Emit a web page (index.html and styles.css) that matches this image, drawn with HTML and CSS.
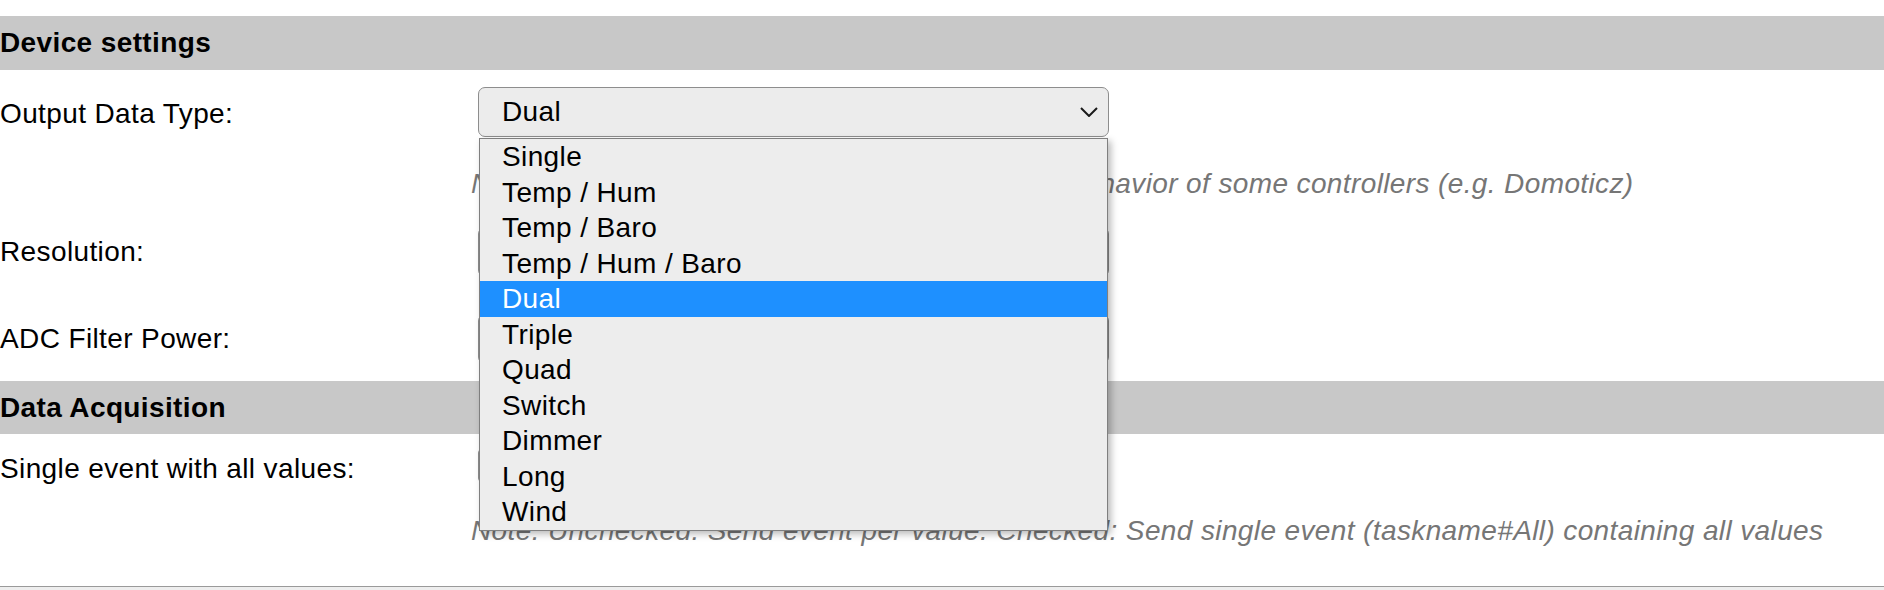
FILE: index.html
```html
<!DOCTYPE html>
<html lang="en">
<head>
<meta charset="utf-8">
<title>Device settings</title>
<link rel="stylesheet" href="styles.css">
</head>
<body>
<div class="page">
  <h3 class="section">Device settings</h3>

  <div class="row row-output">
    <div class="label label-top">Output Data Type:</div>
    <div class="field">
      <div class="select-wrap">
        <div class="select">
          <span class="select-value">Dual</span>
          <svg class="chevron" viewBox="0 0 18 10" width="18" height="10" aria-hidden="true"><path d="M1 1 L9 9 L17 1" fill="none" stroke="#1a1a1a" stroke-width="2"/></svg>
        </div>
        <ul class="dropdown">
          <li>Single</li>
          <li>Temp / Hum</li>
          <li>Temp / Baro</li>
          <li>Temp / Hum / Baro</li>
          <li class="selected">Dual</li>
          <li>Triple</li>
          <li>Quad</li>
          <li>Switch</li>
          <li>Dimmer</li>
          <li>Long</li>
          <li>Wind</li>
        </ul>
      </div>
    </div>
  </div>

  <div class="row row-note">
    <div class="note">Note: Changing the output type may affect the behavior of some controllers (e.g. Domoticz)</div>
  </div>

  <div class="row row-res">
    <div class="label">Resolution:</div>
    <div class="field"><div class="select"><span class="select-value">16 Bit</span></div></div>
  </div>

  <div class="row row-adc">
    <div class="label">ADC Filter Power:</div>
    <div class="field"><div class="select"><span class="select-value">16</span></div></div>
  </div>

  <h3 class="section section-2">Data Acquisition</h3>

  <div class="row row-single">
    <div class="label label-top2">Single event with all values:</div>
    <div class="field"><span class="checkbox"></span></div>
  </div>

  <div class="row row-note2">
    <div class="note">Note: Unchecked: Send event per value. Checked: Send single event (taskname#All) containing all values</div>
  </div>

  <div class="footer"></div>
</div>
</body>
</html>
```

FILE: styles.css
```css
html, body {
  margin: 0;
  padding: 0;
  background: #ffffff;
}

body {
  font-family: "Liberation Sans", Arial, sans-serif;
  font-size: 28px;
  letter-spacing: 0.38px;
  color: #000000;
  overflow: hidden;
}

.page {
  padding-top: 16px;
  display: flex;
  flex-direction: column;
}

.section {
  margin: 0;
  height: 54px;
  line-height: 54px;
  background: #c8c8c8;
  font-size: 28px;
  font-weight: bold;
  padding-left: 0;
}

.section-2 {
  height: 53px;
  line-height: 53px;
}

.row {
  display: flex;
  align-items: center;
}

.label {
  width: 478px;
  flex: none;
  line-height: 32px;
  white-space: nowrap;
}

.field {
  flex: none;
  width: 631px;
}

.row-output {
  height: 90px;
  align-items: flex-start;
}

.label-top {
  padding-top: 28px;
}

.row-output .field {
  padding-top: 17px;
}

.select-wrap {
  position: relative;
}

.select {
  box-sizing: border-box;
  width: 631px;
  height: 50px;
  border: 1px solid #8d8d8d;
  border-radius: 7px;
  background: #ececec;
  display: flex;
  align-items: center;
  justify-content: space-between;
  padding: 0 10px 0 23px;
  line-height: 48px;
}

.chevron {
  display: block;
}

.dropdown {
  position: absolute;
  top: 51px;
  left: 1px;
  width: 629px;
  box-sizing: border-box;
  margin: 0;
  padding: 0;
  list-style: none;
  background: #ededed;
  border: 1px solid #7f7f7f;
  box-shadow: 3px 3px 7px rgba(0, 0, 0, 0.28);
  z-index: 10;
}

.dropdown li {
  height: 35.55px;
  line-height: 35.55px;
  padding-left: 22px;
  white-space: nowrap;
}

.dropdown li.selected {
  background: #1e90ff;
  color: #ffffff;
}

.row-note {
  height: 48px;
}

.note {
  padding-left: 471px;
  font-style: italic;
  color: #767676;
  white-space: nowrap;
  line-height: 32px;
}

.row-res {
  height: 88px;
}

.row-adc {
  height: 85px;
}

.row-single {
  height: 70px;
  align-items: flex-start;
}

.label-top2 {
  padding-top: 19px;
}

.checkbox {
  display: block;
  box-sizing: border-box;
  margin-top: 14px;
  width: 35px;
  height: 35px;
  border: 1px solid #8d8d8d;
  border-radius: 5px;
  background: #ffffff;
}

.row-note2 {
  height: 54px;
}

.footer {
  margin-top: 28px;
  height: 20px;
  border-top: 1px solid #9a9a9a;
  background: #eeeeee;
}
```
